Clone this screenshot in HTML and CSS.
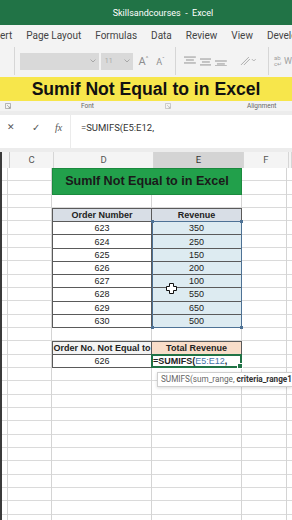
FILE: index.html
```html
<!DOCTYPE html>
<html lang="en">
<head>
    <meta charset="UTF-8">
    <meta name="viewport" content="width=device-width, initial-scale=1.0">
    <title>Sumif Not Equal to in Excel</title>
    <link rel="stylesheet" href="styles.css">
</head>
<body>
    <div class="titlebar"><span>Skillsandcourses&nbsp; - &nbsp;Excel</span></div>

    <nav class="tabs">
        <span>ert</span>
        <span>Page Layout</span>
        <span>Formulas</span>
        <span>Data</span>
        <span>Review</span>
        <span>View</span>
        <span>Develo</span>
    </nav>

    <div class="ribbon">
        <div class="vsep first"></div>
        <div class="fontbox">
            <svg class="chev" width="6" height="4" viewBox="0 0 6 4"><path d="M0.5 0.5 L3 3 L5.5 0.5" fill="none" stroke="#9a9a9a" stroke-width="0.8"/></svg>
        </div>
        <div class="sizebox">
            <span>11</span>
            <svg class="chev" width="6" height="4" viewBox="0 0 6 4"><path d="M0.5 0.5 L3 3 L5.5 0.5" fill="none" stroke="#9a9a9a" stroke-width="0.8"/></svg>
        </div>
        <span class="bigA">A<sup>^</sup></span>
        <span class="smallA">A<sup>ˇ</sup></span>
        <div class="vsep"></div>
        <svg class="align" width="12" height="10" viewBox="0 0 12 10"><path d="M0 1h12M2 4h8M0 7h12" stroke="#8a8a8a" stroke-width="0.9"/></svg>
        <svg class="align" width="12" height="10" viewBox="0 0 12 10"><path d="M0 3h12M2 6h8M0 9h12" stroke="#8a8a8a" stroke-width="0.9"/></svg>
        <svg class="align" width="12" height="10" viewBox="0 0 12 10"><path d="M0 5h12M2 8h8M0 10h12" stroke="#8a8a8a" stroke-width="0.9"/></svg>
        <svg class="orient" width="18" height="10" viewBox="0 0 18 10"><path d="M1 9 L9 1 M4 9 L10 3" stroke="#9a9a9a" stroke-width="0.8" fill="none"/><path d="M12 3 L14 5 L16 3" stroke="#9a9a9a" stroke-width="0.7" fill="none"/></svg>
        <div class="vsep"></div>
        <span class="wrap">ab<br>c&#8629;</span><span class="wrapw">W</span>
    </div>

    <div class="banner">Sumif Not Equal to in Excel</div>

    <div class="groups">
        <svg class="launch" width="6" height="6" viewBox="0 0 6 6"><path d="M0.5 0.5h5v5h-5z M2 2 L5 5 M3.5 5H5V3.5" stroke="#8c8c8c" stroke-width="0.6" fill="none"/></svg>
        <span class="glabel font">Font</span>
        <svg class="launch mid" width="6" height="6" viewBox="0 0 6 6"><path d="M0.5 0.5h5v5h-5z M2 2 L5 5 M3.5 5H5V3.5" stroke="#b0b0b0" stroke-width="0.6" fill="none"/></svg>
        <span class="glabel align-label">Alignment</span>
    </div>

    <div class="strip"></div>

    <div class="fbar">
        <div class="fbar-btns">
            <span class="x">✕</span>
            <span class="ok">✓</span>
            <span class="fx">fx</span>
        </div>
        <div class="fbar-input">=SUMIFS(E5:E12,</div>
    </div>

    <div class="strip"></div>

    <div class="colheads">
        <div></div>
        <div>C</div>
        <div>D</div>
        <div class="sel">E</div>
        <div>F</div>
        <div></div>
    </div>

    <div class="sheet">
        <div class="title-cell">SumIf Not Equal to in Excel</div>

        <div class="tbl t1">
            <div class="c hd">Order Number</div><div class="c hd">Revenue</div>
            <div class="c">623</div><div class="c rv">350</div>
            <div class="c">624</div><div class="c rv">250</div>
            <div class="c">625</div><div class="c rv">150</div>
            <div class="c">626</div><div class="c rv">200</div>
            <div class="c">627</div><div class="c rv">100</div>
            <div class="c">628</div><div class="c rv">550</div>
            <div class="c">629</div><div class="c rv">650</div>
            <div class="c">630</div><div class="c rv">500</div>
        </div>
        <div class="range"></div>

        <div class="tbl t2">
            <div class="c hd gray">Order No. Not Equal to</div><div class="c hd peach">Total Revenue</div>
            <div class="c">626</div><div class="c formula">=SUMIFS(<span class="ref">E5:E12</span>,</div>
        </div>
        <div class="active"></div>

        <div class="tooltip">SUMIFS(sum_range, <b>criteria_range1</b></div>

        <svg class="cursor" width="11" height="11" viewBox="0 0 11 11"><path d="M3.5 0.5h4v3h3v4h-3v3h-4v-3h-3v-4h3z" fill="#fff" stroke="#111" stroke-width="1"/></svg>
    </div>
</body>
</html>
```

FILE: styles.css
```css
* {
    box-sizing: border-box;
}
body {
    margin: 0;
    width: 292px;
    height: 520px;
    overflow: hidden;
    background: #fff;
    font-family: "Liberation Sans", Arial, sans-serif;
}

/* window chrome */
.titlebar {
    height: 25px;
    background: #217346;
    color: #fff;
    font: 9px Roboto, "Liberation Sans", sans-serif;
    display: flex;
    align-items: center;
    justify-content: center;
    padding-left: 34px;
}
.tabs {
    height: 20px;
    background: #f3f3f3;
    color: #444;
    font: 10px Roboto, "Liberation Sans", sans-serif;
    display: flex;
    align-items: center;
    gap: 14px;
    white-space: nowrap;
    overflow: hidden;
    padding-top: 1px;
}
.ribbon {
    height: 32px;
    background: #f3f3f3;
    display: flex;
    align-items: center;
    white-space: nowrap;
    overflow: hidden;
}
.vsep {
    width: 1px;
    height: 28px;
    background: #d6d6d6;
    margin: 0 8px 0 10px;
}
.vsep.first {
    margin: 0 5px 0 14px;
}
.fontbox {
    width: 80px;
    height: 17px;
    background: #d9d9d9;
    display: flex;
    align-items: center;
    justify-content: flex-end;
    padding-right: 3px;
}
.sizebox {
    width: 33px;
    height: 17px;
    margin-left: 2px;
    background: #d9d9d9;
    display: flex;
    align-items: center;
    justify-content: space-between;
    padding: 0 3px 0 4px;
    color: #a8a8a8;
    font: 7px Roboto, sans-serif;
}
.bigA, .smallA {
    font: 11px Roboto, sans-serif;
    color: #8d8d8d;
    margin-left: 5px;
}
.smallA {
    font-size: 9px;
    margin-left: 8px;
}
.bigA sup, .smallA sup {
    font-size: 6px;
}
.align {
    margin-right: 4px;
}
.orient {
    margin-left: 9px;
}
.wrap {
    font: 6px/6px Roboto, sans-serif;
    color: #a0a0a0;
    margin-left: -3px;
}
.wrapw {
    font: 9px Roboto, sans-serif;
    color: #a0a0a0;
    margin-left: 2px;
}

.banner {
    height: 24px;
    background: #f7e64b;
    color: #111;
    font: bold 17.6px/25px "Liberation Sans", Arial, sans-serif;
    text-align: center;
}
.groups {
    height: 10px;
    background: #f3f3f3;
    display: flex;
    align-items: center;
    font: 6.5px Roboto, sans-serif;
    color: #666;
}
.launch {
    margin-left: 5px;
}
.glabel.font {
    margin-left: 70px;
}
.launch.mid {
    margin-left: 71px;
}
.glabel.align-label {
    margin-left: 76px;
}
.strip {
    height: 4px;
    background: #ececec;
}
.fbar {
    height: 33px;
    background: #fff;
    display: flex;
}
.fbar-btns {
    width: 70px;
    display: flex;
    align-items: flex-start;
    padding-top: 7px;
    color: #555;
    font: 10px Roboto, sans-serif;
}
.fbar-btns .x {
    margin-left: 7px;
    font-size: 9px;
}
.fbar-btns .ok {
    margin-left: 17px;
    font-size: 10px;
}
.fbar-btns .fx {
    margin-left: 15px;
    font: italic 10px "Liberation Serif", serif;
}
.fbar-input {
    flex: 1;
    padding: 7px 0 0 10px;
    border-left: 1px solid #ebebeb;
    font: 9.5px Roboto, sans-serif;
    color: #333;
}

/* column headers */
.colheads {
    height: 16px;
    display: grid;
    grid-template-columns: 8px 44px 100px 90px 45px 1fr;
    background: #f4f4f4;
    border-left: 2px solid #3a3a3a;
    font: 9.5px Roboto, sans-serif;
    color: #555;
}
.colheads div {
    border-right: 1px solid #d6d6d6;
    text-align: center;
    line-height: 16px;
}
.colheads div:first-child {
    border-right-color: #c9c9c9;
}
.colheads .sel {
    background: #d4d4d4;
    color: #333;
}

/* worksheet */
.sheet {
    position: relative;
    height: 352px;
    display: grid;
    grid-template-columns: 8px 44px 100px 90px 45px 1fr;
    grid-auto-rows: 13.333px;
    background:
        linear-gradient(#3a3a3a, #3a3a3a) 0 0 / 2px 100% no-repeat,
        linear-gradient(#d4d4d4, #d4d4d4) 7px 0 / 1px 100% no-repeat,
        linear-gradient(#d4d4d4, #d4d4d4) 51px 0 / 1px 100% no-repeat,
        linear-gradient(#d4d4d4, #d4d4d4) 151px 0 / 1px 100% no-repeat,
        linear-gradient(#d4d4d4, #d4d4d4) 241px 0 / 1px 100% no-repeat,
        linear-gradient(#d4d4d4, #d4d4d4) 286px 0 / 1px 100% no-repeat,
        repeating-linear-gradient(to bottom, transparent 0 12.333px, #dadada 12.333px 13.333px);
    font-size: 9px;
    color: #222;
}
.title-cell {
    grid-column: 3 / 5;
    grid-row: 1 / 3;
    background: #22a04b;
    border: 1px solid #1b8a3e;
    color: #1a1a1a;
    font-weight: bold;
    font-size: 12.6px;
    display: flex;
    align-items: center;
    justify-content: center;
}
.tbl {
    grid-column: 3 / 5;
    display: grid;
    grid-template-columns: 99px 1fr;
    border-top: 1px solid #5a5a5a;
    border-left: 1px solid #5a5a5a;
    background: #fff;
}
.t1 {
    grid-row: 4 / 13;
    grid-template-rows: repeat(9, 1fr);
}
.t2 {
    grid-row: 14 / 16;
    grid-template-rows: repeat(2, 1fr);
}
.c {
    border-right: 1px solid #5a5a5a;
    border-bottom: 1px solid #5a5a5a;
    display: flex;
    align-items: center;
    justify-content: center;
    white-space: nowrap;
    overflow: hidden;
}
.c.hd {
    background: #d8dee6;
    font-weight: bold;
}
.c.rv {
    background: #ddebf1;
}
.c.gray {
    background: #f3f3f3;
}
.c.peach {
    background: #f8ddc9;
}
.c.formula {
    justify-content: flex-start;
    font-weight: bold;
    padding-left: 1px;
}
.ref {
    color: #4472a8;
    font-weight: normal;
}
.range {
    grid-column: 4;
    grid-row: 5 / 13;
    border: 1px solid #4e7295;
    position: relative;
}
.range::before, .range::after {
    content: "";
    position: absolute;
    width: 3px;
    height: 3px;
    background: #4e7295;
    left: -2px;
    box-shadow: 89px 0 0 #4e7295;
}
.range::before {
    top: -2px;
}
.range::after {
    bottom: -2px;
}
.active {
    grid-column: 4;
    grid-row: 15;
    border: 2px solid #217346;
    margin: -1px 0 0 -1px;
    position: relative;
}
.active::after {
    content: "";
    position: absolute;
    right: -3px;
    bottom: -3px;
    width: 4px;
    height: 4px;
    background: #217346;
    border: 1px solid #fff;
}
.tooltip {
    position: absolute;
    left: 157px;
    top: 204px;
    height: 15px;
    padding: 0 0 0 3px;
    background: #fff;
    border: 1px solid #cfcfcf;
    border-right: none;
    box-shadow: 0 1px 3px rgba(0, 0, 0, 0.15);
    font: 8.2px/13px Roboto, sans-serif;
    color: #666;
    white-space: nowrap;
}
.tooltip b {
    color: #333;
}
.cursor {
    position: absolute;
    left: 166px;
    top: 115px;
}
```
